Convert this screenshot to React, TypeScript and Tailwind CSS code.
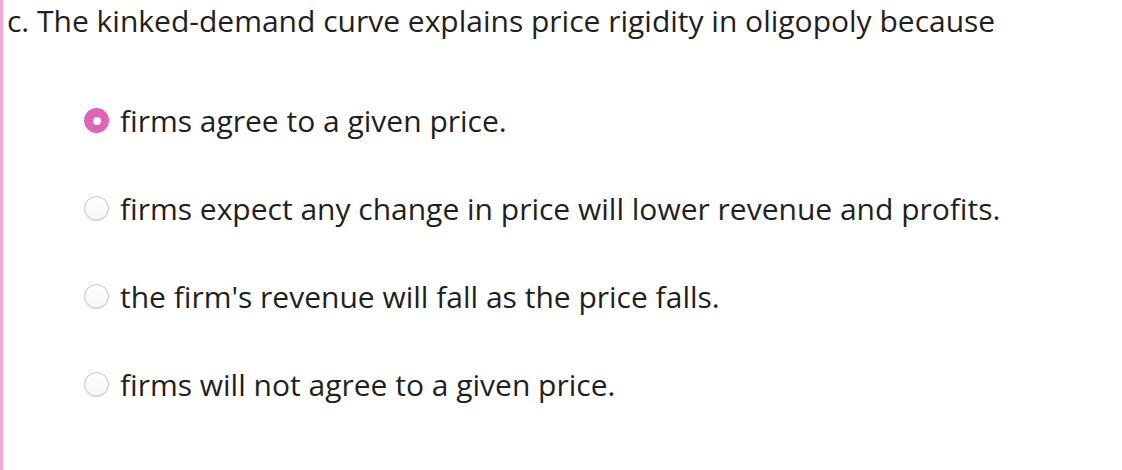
const options = [
  { label: 'firms agree to a given price.', checked: true },
  { label: 'firms expect any change in price will lower revenue and profits.', checked: false },
  { label: "the firm's revenue will fall as the price falls.", checked: false },
  { label: 'firms will not agree to a given price.', checked: false },
]

function Radio({ checked }: { checked: boolean }) {
  if (checked) {
    return (
      <span className="flex h-[25px] w-[25px] shrink-0 items-center justify-center rounded-full bg-[#e063b5]">
        <span className="h-[8px] w-[8px] rounded-full bg-white" />
      </span>
    )
  }
  return (
    <span className="h-[25px] w-[25px] shrink-0 rounded-full border border-[#c4c4c4] bg-gradient-to-b from-white to-[#f6f6f6] shadow-[inset_0_-1px_1px_rgba(0,0,0,0.05)]" />
  )
}

export default function App() {
  return (
    <div
      className="h-[470px] w-[1122px] bg-white text-[#1f1f1f]"
      style={{ fontFamily: '"Open Sans", "Liberation Sans", sans-serif' }}
    >
      <div className="h-full border-l-[3px] border-[#f2aad3] pl-[4px]">
        <p className="pt-[2px] text-[30px] leading-[38px]">
          c. The kinked-demand curve explains price rigidity in oligopoly because
        </p>
        <div className="mt-[66px] flex flex-col gap-[59px] pl-[77px]">
          {options.map(o => (
            <label key={o.label} className="flex h-[29px] items-center gap-[11px] text-[30px]">
              <Radio checked={o.checked} />
              <span>{o.label}</span>
            </label>
          ))}
        </div>
      </div>
    </div>
  )
}
